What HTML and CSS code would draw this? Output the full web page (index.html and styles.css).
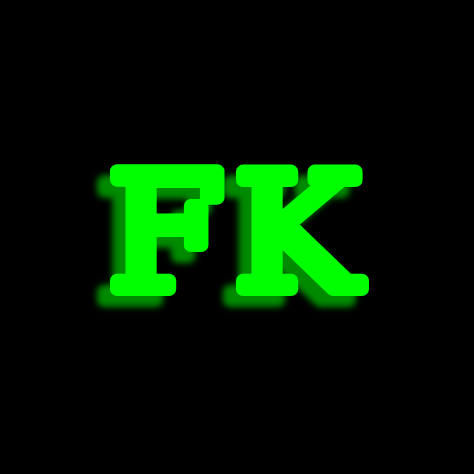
FILE: index.html
```html
<!DOCTYPE html>
<html><head><meta charset="utf-8"><link rel="stylesheet" href="styles.css"></head>
<body><svg class="logo" viewBox="0 0 474 474" width="474" height="474" role="img" aria-label="FK">
<g class="shadowed"><text class="glyph" x="104.3 226" y="289">FK</text></g>
</svg></body></html>
```
FILE: styles.css
```css
html,body{margin:0;height:100%;background:#000}
.logo{display:block}
.shadowed{filter:drop-shadow(-13px 11px 3px #008a00)}
.glyph{font-family:"DejaVu Serif",serif;font-size:162px;fill:#00ff00;stroke:#00ff00;stroke-width:14px;stroke-linejoin:round;transform:scaleX(1.035)}
```
